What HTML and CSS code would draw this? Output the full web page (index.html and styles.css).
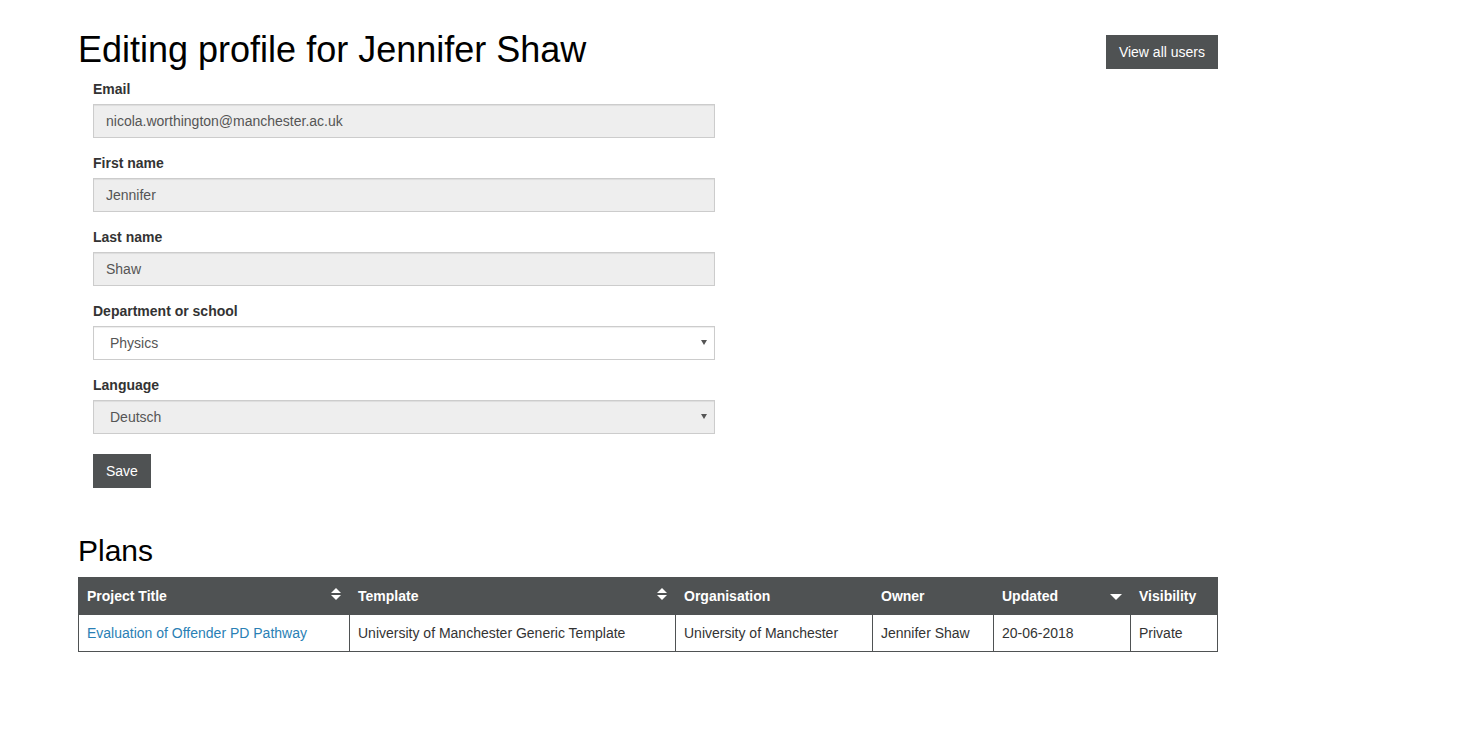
FILE: index.html
```html
<!DOCTYPE html>
<html lang="en">
<head>
<meta charset="utf-8">
<title>Editing profile for Jennifer Shaw</title>
<link rel="stylesheet" href="styles.css">
</head>
<body>
<main class="page">
  <div class="page-header">
    <h1 class="title">Editing profile for Jennifer Shaw</h1>
    <a class="btn" href="#">View all users</a>
  </div>

  <form class="profile-form">
    <div class="form-group">
      <label class="label">Email</label>
      <input class="control" type="text" value="nicola.worthington@manchester.ac.uk">
    </div>
    <div class="form-group">
      <label class="label">First name</label>
      <input class="control" type="text" value="Jennifer">
    </div>
    <div class="form-group">
      <label class="label">Last name</label>
      <input class="control" type="text" value="Shaw">
    </div>
    <div class="form-group">
      <label class="label">Department or school</label>
      <div class="select-wrap">
        <select class="control select select-white"><option>Physics</option></select>
      </div>
    </div>
    <div class="form-group">
      <label class="label">Language</label>
      <div class="select-wrap">
        <select class="control select"><option>Deutsch</option></select>
      </div>
    </div>
    <button class="btn save" type="button">Save</button>
  </form>

  <h2 class="subtitle">Plans</h2>
  <table class="plans">
    <colgroup>
      <col class="c-title"><col class="c-template"><col class="c-org"><col class="c-owner"><col class="c-updated"><col class="c-vis">
    </colgroup>
    <thead>
      <tr>
        <th><span class="th-inner">Project Title<span class="sort"><span class="up"></span><span class="down"></span></span></span></th>
        <th><span class="th-inner">Template<span class="sort"><span class="up"></span><span class="down"></span></span></span></th>
        <th>Organisation</th>
        <th>Owner</th>
        <th><span class="th-inner">Updated<span class="sort"><span class="down solo"></span></span></span></th>
        <th>Visibility</th>
      </tr>
    </thead>
    <tbody>
      <tr>
        <td><a class="link" href="#">Evaluation of Offender PD Pathway</a></td>
        <td>University of Manchester Generic Template</td>
        <td>University of Manchester</td>
        <td>Jennifer Shaw</td>
        <td>20-06-2018</td>
        <td>Private</td>
      </tr>
    </tbody>
  </table>
</main>
</body>
</html>
```

FILE: styles.css
```css
* { box-sizing: border-box; }

html, body {
  margin: 0;
  padding: 0;
  background: #fff;
}

body {
  font-family: "Liberation Sans", Arial, Helvetica, sans-serif;
  font-size: 14px;
  line-height: 20px;
  color: #333;
}

.page {
  width: 1140px;
  margin-left: 78px;
  padding-top: 10px;
}

.page-header {
  display: flex;
  justify-content: space-between;
  align-items: flex-start;
}

.title {
  margin: 20px 0 9px;
  font-size: 36px;
  line-height: 39.6px;
  font-weight: 400;
  color: #000;
}

.page-header .btn {
  margin-top: 25px;
}

.btn {
  display: inline-block;
  padding: 6px 12px;
  border: 1px solid #4f5253;
  background: #4f5253;
  color: #fff;
  font-family: inherit;
  font-size: 14px;
  line-height: 20px;
  text-decoration: none;
  border-radius: 0;
  cursor: pointer;
}

.profile-form {
  margin-left: 15px;
  width: 622px;
  margin-bottom: 46px;
}

.form-group {
  margin-bottom: 15px;
}

.label {
  display: block;
  margin-bottom: 5px;
  font-weight: 700;
  color: #333;
}

.control {
  display: block;
  width: 100%;
  height: 34px;
  padding: 6px 12px;
  border: 1px solid #ccc;
  background: #eee;
  color: #555;
  font-family: inherit;
  font-size: 14px;
  line-height: 20px;
  border-radius: 0;
  box-shadow: inset 0 1px 1px rgba(0,0,0,0.075);
  outline: none;
}

.select-wrap {
  position: relative;
}

.select {
  -webkit-appearance: none;
  appearance: none;
  padding-left: 16px;
}

.select-white {
  background: #fff;
}

.select-wrap::after {
  content: "";
  position: absolute;
  right: 8px;
  top: 14px;
  border-left: 3px solid transparent;
  border-right: 3px solid transparent;
  border-top: 5px solid #555;
  pointer-events: none;
}

.save {
  margin-top: 5px;
}

.subtitle {
  margin: 20px 0 10px;
  font-size: 30px;
  line-height: 33px;
  font-weight: 400;
  color: #000;
}

.plans {
  width: 1139px;
  border-collapse: collapse;
  table-layout: fixed;
}

.c-title { width: 271px; }
.c-template { width: 326px; }
.c-org { width: 197px; }
.c-owner { width: 121px; }
.c-updated { width: 137px; }
.c-vis { width: 87px; }

.plans th {
  background: #4f5253;
  color: #fff;
  font-weight: 700;
  text-align: left;
  padding: 8px;
  border: 1px solid #4f5253;
  line-height: 20px;
}

.th-inner {
  display: flex;
  justify-content: space-between;
  align-items: center;
}

.sort {
  display: flex;
  flex-direction: column;
  align-items: center;
  gap: 2px;
  width: 11px;
  margin-top: -3px;
}

.sort .up {
  width: 0;
  height: 0;
  border-left: 5px solid transparent;
  border-right: 5px solid transparent;
  border-bottom: 5px solid #fff;
}

.sort .down {
  width: 0;
  height: 0;
  border-left: 5px solid transparent;
  border-right: 5px solid transparent;
  border-top: 5px solid #fff;
}

.sort .solo {
  margin-top: 5px;
  margin-right: 1px;
  border-left-width: 6px;
  border-right-width: 6px;
  border-top-width: 6px;
}

.plans td {
  padding: 8px;
  border: 1px solid #4f5253;
  line-height: 20px;
  color: #333;
}

.link {
  color: #2a7fb5;
  text-decoration: none;
}
```
